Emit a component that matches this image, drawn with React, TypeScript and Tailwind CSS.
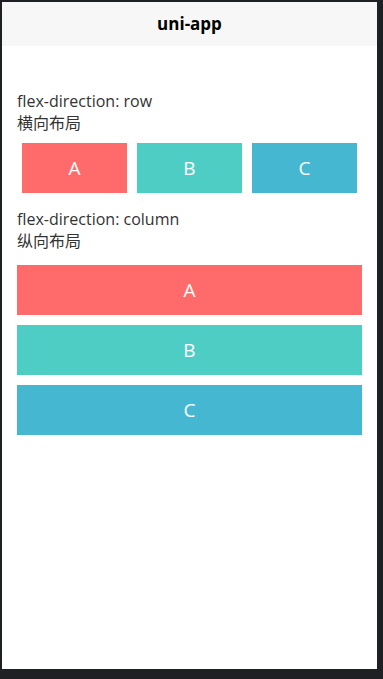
const items = [
  { label: "A", color: "bg-[#ff6b6b]" },
  { label: "B", color: "bg-[#4ecdc4]" },
  { label: "C", color: "bg-[#45b7d1]" },
];

const font = "font-['Segoe_UI','Open_Sans','Noto_Sans_CJK_SC',sans-serif]";

export default function App() {
  return (
    <div className="h-[679px] w-[383px] bg-[#1e2023] pt-[2px] pl-[2px] pr-[6px] pb-[10px]">
      <div className={`flex h-full flex-col bg-white ${font}`}>
        <div className="flex h-[44px] items-center justify-center bg-[#f7f7f7]">
          <span className="text-[17px] font-bold text-black">uni-app</span>
        </div>

        <div className="px-[15px] pt-[44px]">
          <div className="text-[16px] leading-[22px] text-[#333]">
            <div>flex-direction: row</div>
            <div>横向布局</div>
          </div>

          <div className="mt-[4px] flex">
            {items.map((it) => (
              <div
                key={it.label}
                className={`m-[5px] flex h-[50px] flex-1 items-center justify-center text-[19px] text-white ${it.color}`}
              >
                {it.label}
              </div>
            ))}
          </div>

          <div className="mt-[10px] text-[16px] leading-[22px] text-[#333]">
            <div>flex-direction: column</div>
            <div>纵向布局</div>
          </div>

          <div className="mt-[13px] flex flex-col gap-[10px]">
            {items.map((it) => (
              <div
                key={it.label}
                className={`flex h-[50px] items-center justify-center text-[19px] text-white ${it.color}`}
              >
                {it.label}
              </div>
            ))}
          </div>
        </div>
      </div>
    </div>
  );
}
